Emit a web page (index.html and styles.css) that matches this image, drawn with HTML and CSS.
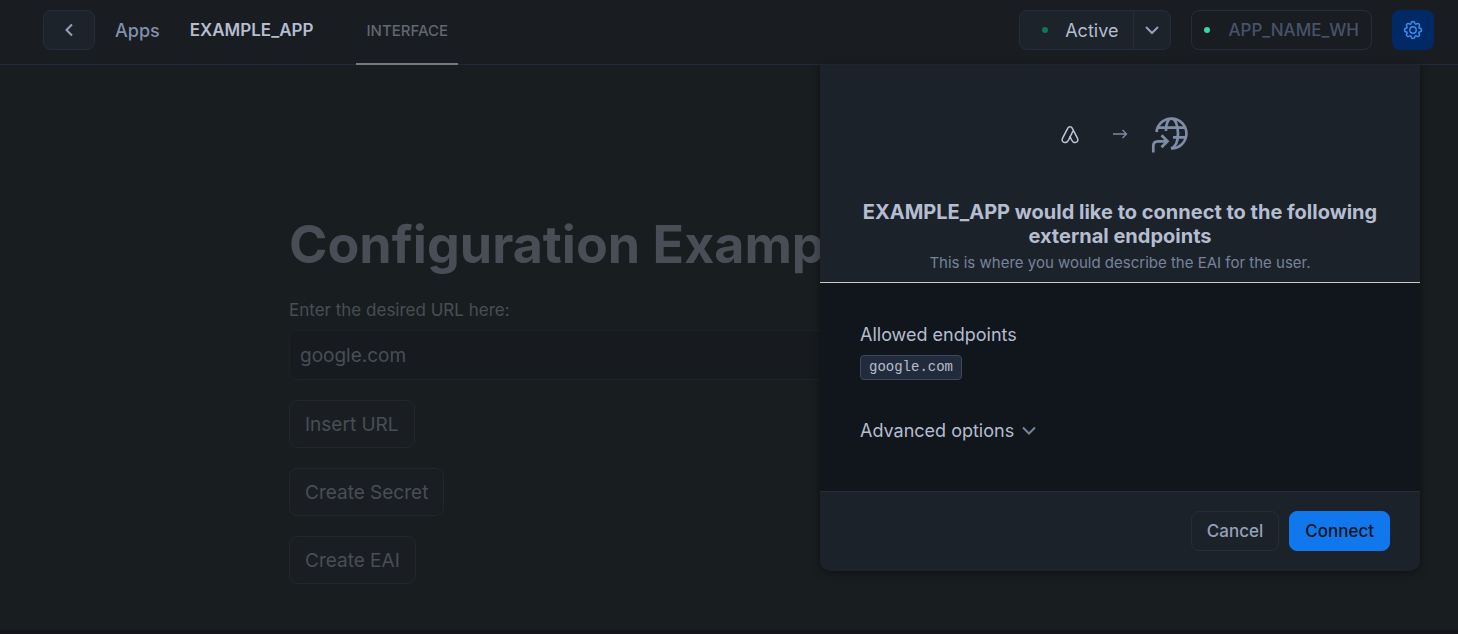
FILE: index.html
```html
<!DOCTYPE html>
<html lang="en">
<head>
    <meta charset="UTF-8">
    <meta name="viewport" content="width=device-width, initial-scale=1.0">
    <title>EXAMPLE_APP</title>
    <link rel="stylesheet" href="styles.css">
</head>
<body>

    <header class="topbar">
        <button type="button" class="btn back" aria-label="Back">
            <svg width="12" height="16" viewBox="0 0 12 16"><path d="M9 2.500 3.500 8 9 13.500"/></svg>
        </button>
        <a href="#" class="crumb">Apps</a>
        <span class="app-name">EXAMPLE_APP</span>
        <nav class="tabs"><a href="#" class="tab">INTERFACE</a></nav>

        <div class="actions">
            <div class="split">
                <button type="button" class="status"><span class="dot dim"></span>Active</button>
                <button type="button" class="more" aria-label="More">
                    <svg width="14" height="10" viewBox="0 0 14 10"><path d="M1 2l6 6 6-6"/></svg>
                </button>
            </div>
            <button type="button" class="btn warehouse"><span class="dot"></span>APP_NAME_WH</button>
            <button type="button" class="settings" aria-label="Settings">
                <svg width="20" height="20" viewBox="0 0 20 20">
                    <path d="M8 3.800C8.300 0.700 11.700 0.700 12 3.800Q12.500 4.300 13 4.200C15.400 2.300 17.700 4.600 15.800 7Q15.700 7.500 16.200 8C19.300 8.300 19.300 11.700 16.200 12Q15.700 12.500 15.800 13C17.700 15.400 15.400 17.700 13 15.800Q12.500 15.700 12 16.200C11.700 19.300 8.300 19.300 8 16.200Q7.500 15.700 7 15.800C4.600 17.700 2.300 15.400 4.200 13Q4.300 12.500 3.800 12C0.700 11.700 0.700 8.300 3.800 8Q4.300 7.500 4.200 7C2.300 4.600 4.600 2.300 7 4.200Q7.500 4.300 8 3.800Z"/>
                    <circle cx="10" cy="10" r="3.200"/>
                </svg>
            </button>
        </div>
    </header>

    <div class="stage">
        <main class="content">
            <h1>Configuration Example</h1>
            <form class="config">
                <label for="url">Enter the desired URL here:</label>
                <input type="text" id="url" value="google.com">
                <button type="button">Insert URL</button>
                <button type="button">Create Secret</button>
                <button type="button">Create EAI</button>
            </form>
        </main>

        <section class="dialog" role="dialog" aria-labelledby="dialogTitle">
            <div class="dialog-head">
                <div class="icons">
                    <svg class="logo" width="38" height="38" viewBox="0 0 38 38">
                        <path d="M22 16 17.500 25.200C16.800 26.600 15.500 27.800 13.500 27.500 11.300 27.100 10.600 25.200 11.600 23.200L16.800 13.200C17.700 11.400 20.300 11.400 21.200 13.200L26.400 23.200C27.400 25.200 26.700 27.100 24.500 27.500 22.500 27.800 21.400 26.500 20.800 25.200L18.600 20.800"/>
                    </svg>
                    <svg class="arrow" width="16" height="12" viewBox="0 0 16 12"><path d="M1 6h13.500M10.500 2l4 4-4 4"/></svg>
                    <svg class="globe" width="38" height="38" viewBox="0 0 38 38">
                        <path d="M5.500 17A15 15 0 1 1 20 33.500M6.500 12.700H34.500M22 22.300H34.500M15 16C14.500 10 17 3.500 20.500 3.500S27 10 27 18.500 24 32 20 33.500M2.300 37.500V31Q2.300 26.300 7 26.300H16M10.500 20.300l6 6-6 6"/>
                    </svg>
                </div>
                <h2 id="dialogTitle">EXAMPLE_APP would like to connect to the following external endpoints</h2>
                <p>This is where you would describe the EAI for the user.</p>
            </div>
            <div class="dialog-body">
                <h3>Allowed endpoints</h3>
                <code>google.com</code>
                <button type="button" class="advanced">Advanced options
                    <svg width="14" height="10" viewBox="0 0 14 10"><path d="M1 1.500l6 6 6-6"/></svg>
                </button>
            </div>
            <div class="dialog-foot">
                <button type="button" class="btn cancel">Cancel</button>
                <button type="button" class="btn connect">Connect</button>
            </div>
        </section>
    </div>

</body>
</html>
```
FILE: styles.css
```css
* { margin: 0; padding: 0; box-sizing: border-box; }
body { display: flex; flex-direction: column; min-height: 100vh; background: #181d20; border-bottom: 4px solid #13151a; font-family: Inter, sans-serif; color: #b5bdd0; }
button { font: inherit; color: inherit; background: none; border: none; cursor: pointer; }
a { color: inherit; text-decoration: none; }
svg { display: block; flex: none; fill: none; stroke: currentColor; stroke-width: 2; }

.topbar { display: flex; align-items: center; height: 65px; padding: 0 24px 4px 43px; background: #191c21; border-bottom: 1px solid #212a3b; font-size: 18px; }
.btn { display: flex; align-items: center; justify-content: center; height: 40px; padding: 0 15px; border: 1px solid #252d3d; border-radius: 8px; }
.back { width: 52px; background: #1c232a; color: #94a1b8; }
.crumb { margin-left: 20px; font-weight: 500; color: #8290aa; }
.app-name { margin-left: 30px; font-size: 17px; font-weight: 600; }
.tabs { align-self: stretch; display: flex; margin: 0 0 -5px 43px; }
.tab { display: flex; align-items: center; padding: 0 10px 3px; border-bottom: 2px solid #757983; font-size: 15px; font-weight: 500; color: #626770; }
.actions { display: flex; gap: 20px; margin-left: auto; }
.split { display: flex; height: 40px; border: 1px solid #252d3d; border-radius: 8px; background: #1c232a; }
.status { display: flex; align-items: center; padding: 0 15px 0 22px; gap: 17px; }
.more { padding: 0 11px; border-left: 1px solid #252d3d; color: #94a1b8; }
.dot { width: 6px; height: 6px; border-radius: 50%; background: #34d9a6; }
.dot.dim { background: #087a57; }
.warehouse { gap: 18px; padding: 0 12px; font-size: 17px; font-weight: 500; color: #47536b; }
.settings { display: flex; align-items: center; justify-content: center; width: 42px; height: 40px; border-radius: 8px; background: #002966; color: #3a8ff0; }
.settings svg { stroke-width: 1.4; }

.stage { position: relative; flex: 1; padding: 0 38px; }
.content { max-width: 880px; margin: 0 auto; padding: 146px 0 46px; color: #484d56; }
h1 { font-size: 52px; line-height: 67px; font-weight: 700; white-space: nowrap; }
.config { display: flex; flex-direction: column; align-items: flex-start; gap: 20px; margin-top: 20px; }
.config label { margin-bottom: -12px; font-size: 17px; line-height: 24px; }
.config input { width: 100%; height: 50px; padding: 0 10px; border: 1px solid #1d2226; border-radius: 8px; background: #171b1f; font: inherit; font-size: 19px; color: inherit; }
.config button { height: 48px; padding: 0 15px; border: 1px solid #22272b; border-radius: 8px; background: #1a1e22; font-size: 19px; }

/* opens over the page, under the top bar */
.dialog { position: absolute; top: 0; right: 38px; width: 600px; border-radius: 0 0 10px 10px; background: #1c222a; box-shadow: 0 2px 8px rgba(0, 0, 0, 0.4); }
.dialog-head { padding: 49px 40px 9px; border-bottom: 1px solid #c9cbc8; text-align: center; }
.icons { display: flex; align-items: center; justify-content: center; gap: 23px; height: 40px; margin-bottom: 46px; color: #7e8ca6; }
.logo { color: #bdc4d5; stroke-width: 1.5; }
.arrow { stroke-width: 1.3; }
.globe { stroke-width: 2.7; }
h2 { font-size: 20px; line-height: 24px; font-weight: 700; }
.dialog-head p { margin-top: 5px; font-size: 15px; line-height: 20px; color: #76839b; }
.dialog-body { display: flex; flex-direction: column; align-items: flex-start; padding: 40px 40px 48px; background: #11151c; }
h3, .advanced { font-size: 18px; line-height: 24px; font-weight: 400; }
code { margin: 8px 0 39px; padding: 0 8px; border: 1px solid #3c485d; border-radius: 4px; background: #222b3b; font: 14px/23px "Liberation Mono", monospace; }
.advanced { display: flex; align-items: center; gap: 8px; }
.advanced svg { color: #76839b; }
.dialog-foot { display: flex; justify-content: flex-end; gap: 10px; padding: 19px 30px 20px; border-top: 1px solid #252d3d; font-size: 17px; font-weight: 500; }
.cancel { color: #94a1b8; }
.connect { border-color: #1078ec; background: #1078ec; color: #11151c; }
```
